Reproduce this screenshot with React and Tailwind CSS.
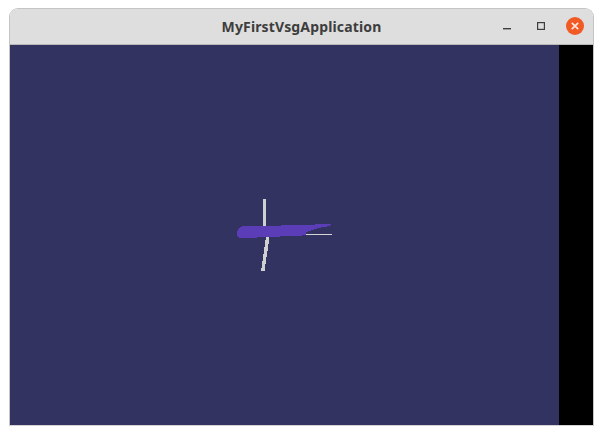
export default function App() {
  return (
    <div className="w-[603px] h-[435px] bg-white pt-2 pl-[9px] overflow-hidden">
      <div className="w-[585px] h-[418px] flex flex-col rounded-t-[9px] border border-[#c4c4c4] border-b-[#d4d4d4] overflow-hidden">
        <div className="h-[36px] shrink-0 bg-[#dedede] border-b border-[#b8b8b8] flex items-center relative">
          <div className="flex-1 text-center text-[14px] tracking-[0.15px] font-bold text-[#3d3d3d] pb-[1px]" style={{ fontFamily: '"Noto Sans", sans-serif' }}>
            MyFirstVsgApplication
          </div>
          <div className="absolute right-[9px] top-[8px] flex items-start">
            <svg width="8" height="2" viewBox="0 0 8 2" className="mt-[11px] mr-[26px]">
              <rect x="0" y="0" width="8" height="1.4" fill="#3d3d3d" />
            </svg>
            <svg width="8" height="8" viewBox="0 0 8 8" className="mt-[5px] mr-[21px]">
              <rect x="0.6" y="0.6" width="6.8" height="6.8" fill="none" stroke="#3d3d3d" strokeWidth="1.2" />
            </svg>
            <svg width="18" height="18" viewBox="0 0 18 18">
              <circle cx="9" cy="9" r="9" fill="#f15a24" />
              <path d="M5.8 5.8 L12.2 12.2 M12.2 5.8 L5.8 12.2" stroke="#fbe6dc" strokeWidth="1.7" />
            </svg>
          </div>
        </div>
        <div className="flex-1 flex min-h-0">
          <div className="w-[549px] bg-[#333361]">
            <svg width="549" height="380" viewBox="10 45 549 380" className="block" shapeRendering="crispEdges">
              <rect x="263" y="199" width="3" height="27" fill="#d0d0d0" />
              <path d="M266 237 L269.5 237 L264.5 271 L261 271 Z" fill="#d0d0d0" />
              <rect x="306" y="234" width="26" height="1" fill="#d6d6d6" />
              <polygon
                points="237,231.7 239,228.3 243,226 281,225.7 281,225 315,224.7 315,224 331,224 330,225.3 326.7,226.7 318.3,228 312.3,230 306,232.3 306,235.3 286,236.3 257,237.3 257,238 239,238 237,235.3"
                fill="#5c3db8"
              />
            </svg>
          </div>
          <div className="flex-1 bg-black" />
        </div>
      </div>
    </div>
  );
}
